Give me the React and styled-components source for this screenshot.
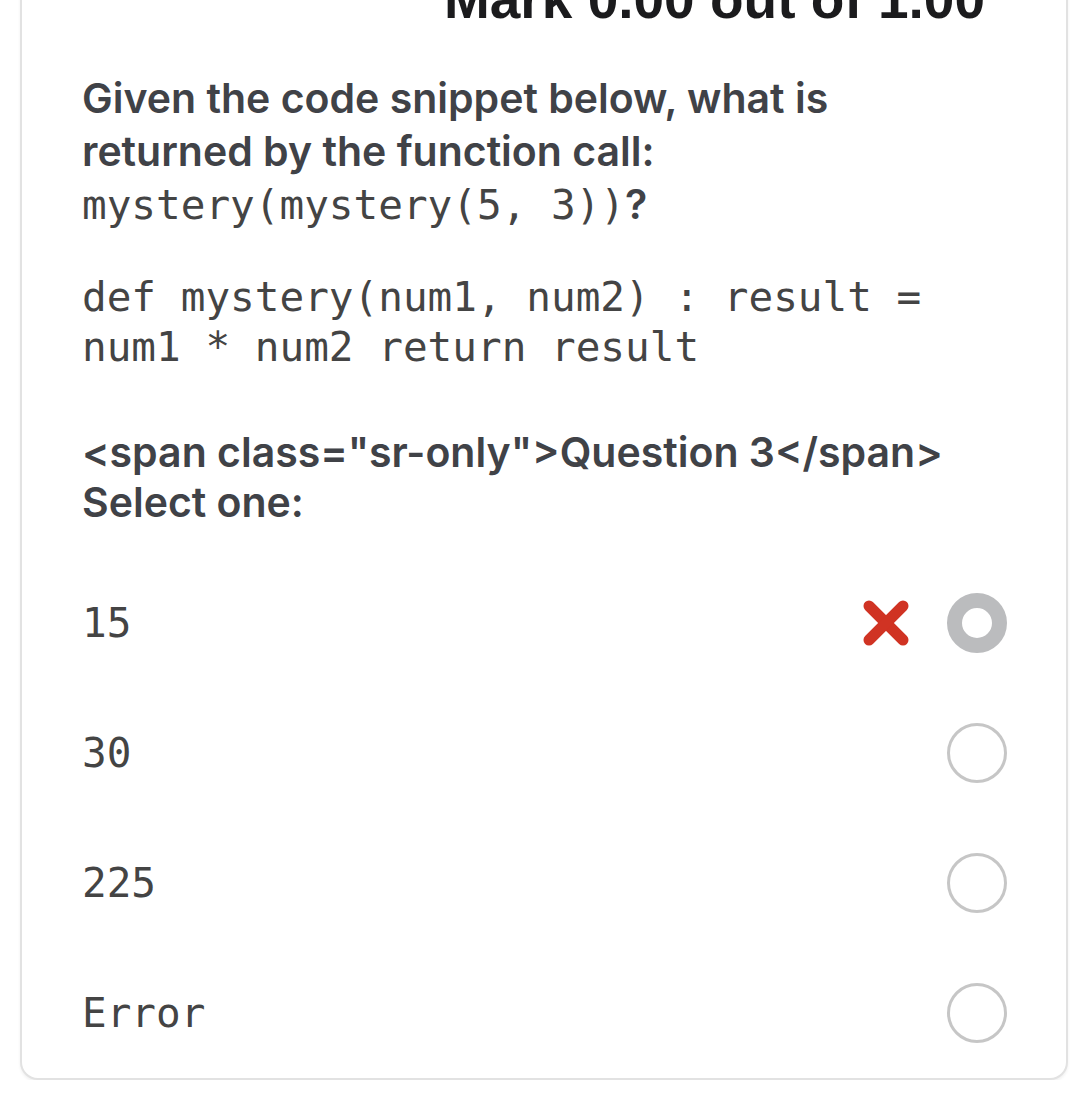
import styled, { createGlobalStyle } from 'styled-components';

const GlobalStyle = createGlobalStyle`
  html, body {
    margin: 0;
    padding: 0;
    background: #ffffff;
    overflow: hidden;
  }
`;

const Page = styled.div`
  padding: 0 10px 0 20px;
  font-family: Inter, "Liberation Sans", Arial, sans-serif;
`;

const Card = styled.section`
  margin-top: -34px;
  border: 2px solid #e2e2e2;
  border-radius: 18px;
  box-shadow: 0 2px 3px rgba(0, 0, 0, 0.06);
  padding: 0 60px 0 60px;
  background: #fff;
`;

const Grade = styled.h2`
  margin: 0;
  padding-right: 21px;
  text-align: right;
  font-family: "Liberation Sans", Arial, sans-serif;
  font-size: 55px;
  font-weight: 700;
  line-height: 62px;
  color: #1b1b1d;
`;

const QuestionText = styled.div`
  margin-top: 42px;
  font-size: 41px;
  font-weight: 600;
  line-height: 53px;
  color: #404247;
`;

const Code = styled.span`
  font-family: "DejaVu Sans Mono", "Liberation Mono", monospace;
  font-size: 41px;
  font-weight: 400;
  color: #444;
  line-height: 53px;
`;

const CodeBlock = styled.div`
  margin-top: 40px;
  font-family: "DejaVu Sans Mono", "Liberation Mono", monospace;
  font-size: 41px;
  line-height: 50px;
  color: #444;
`;

const Prompt = styled.div`
  margin-top: ${(p) => p.$gap || 0}px;
  font-size: 41px;
  font-weight: 600;
  line-height: 50px;
  color: #404247;
`;

const Options = styled.div`
  margin-top: 31px;
  display: flex;
  flex-direction: column;
`;

const Option = styled.label`
  height: 130px;
  display: flex;
  align-items: center;
  justify-content: space-between;
`;

const OptionText = styled.span`
  font-family: "DejaVu Sans Mono", "Liberation Mono", monospace;
  font-size: 41px;
  line-height: 41px;
  color: #444;
`;

const Marks = styled.div`
  display: flex;
  align-items: center;
  gap: 37px;
`;

const Radio = styled.span`
  box-sizing: border-box;
  width: 60px;
  height: 60px;
  margin-right: -1px;
  border-radius: 50%;
  border: ${(p) => (p.$checked ? '15px solid #bbbcbe' : '3px solid #c6c6c6')};
  background: #fff;
`;

const CrossIcon = () => (
  <svg width="48" height="48" viewBox="0 0 48 48">
    <g stroke="#d03323" strokeWidth="11" strokeLinecap="round">
      <line x1="7" y1="7" x2="41" y2="41" />
      <line x1="41" y1="7" x2="7" y2="41" />
    </g>
  </svg>
);

const answers = [
  { text: '15', checked: true, wrong: true },
  { text: '30' },
  { text: '225' },
  { text: 'Error' },
];

export default function App() {
  return (
    <Page>
      <GlobalStyle />
      <Card>
        <Grade>Mark 0.00 out of 1.00</Grade>
        <QuestionText>
          Given the code snippet below, what is
          <br />
          returned by the function call:
          <br />
          <Code>mystery(mystery(5, 3))</Code>?
        </QuestionText>
        <CodeBlock>def mystery(num1, num2) : result = num1 * num2 return result</CodeBlock>
        <Prompt $gap={55}>&lt;span class="sr-only"&gt;Question 3&lt;/span&gt;</Prompt>
        <Prompt>Select one:</Prompt>
        <Options>
          {answers.map((a) => (
            <Option key={a.text}>
              <OptionText>{a.text}</OptionText>
              <Marks>
                {a.wrong && <CrossIcon />}
                <Radio $checked={a.checked} />
              </Marks>
            </Option>
          ))}
        </Options>
      </Card>
    </Page>
  );
}
